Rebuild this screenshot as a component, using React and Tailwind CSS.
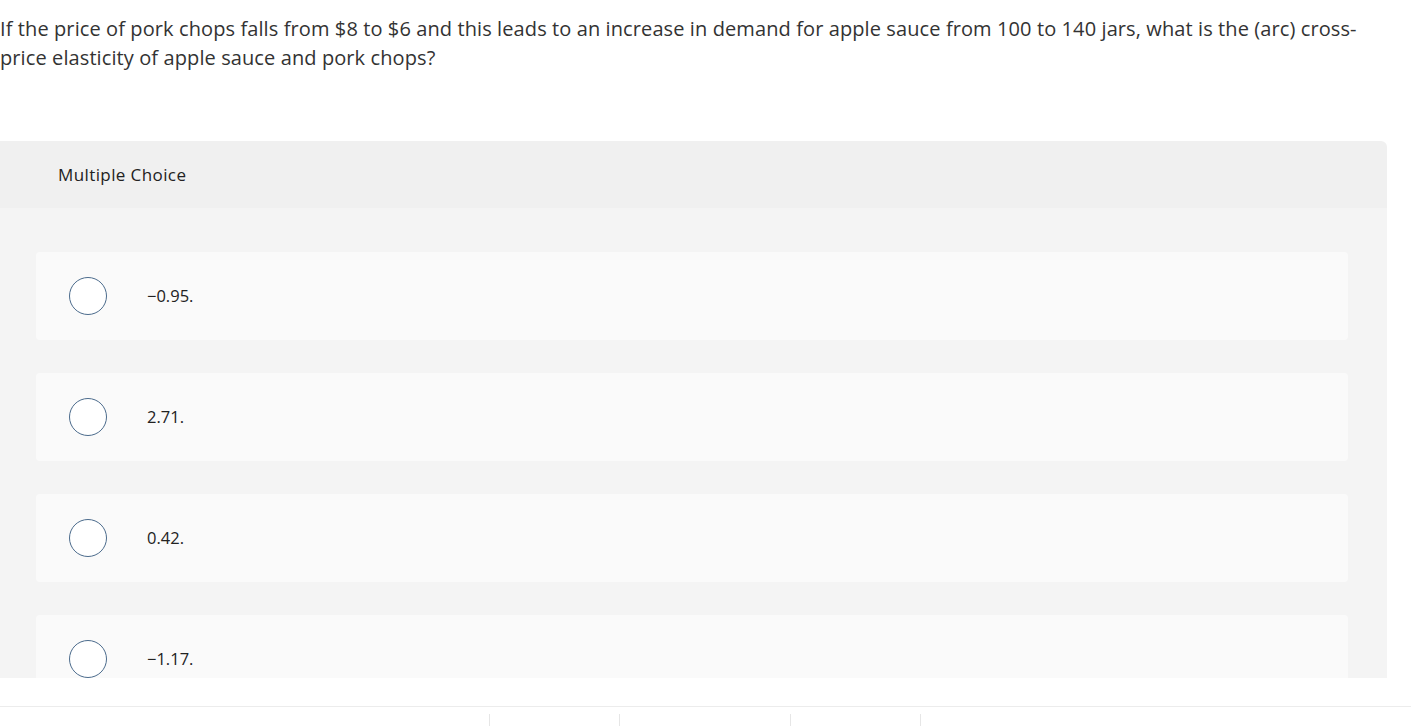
const options = ["\u22120.95.", "2.71.", "0.42.", "\u22121.17."];

const Option = ({ label }) => (
  <div className="flex items-center shrink-0 h-[88px] rounded-[4px] bg-[#fafafa]">
    <div className="ml-[33px] w-[38px] h-[38px] rounded-full border-[1.5px] border-[#4b6b8c] bg-white shrink-0" />
    <span className="ml-[40px] text-[16.5px] text-[#222]">{label}</span>
  </div>
);

export default function App() {
  return (
    <div
      className="w-[1411px] h-[726px] bg-white overflow-hidden text-[#333]"
      style={{ fontFamily: "'Open Sans', sans-serif" }}
    >
      <p className="w-[1372px] text-[20px] tracking-[0.1px] leading-[29px] pt-[14px]">
        If the price of pork chops falls from $8 to $6 and this leads to an increase in demand for apple sauce from 100 to 140 jars, what is the (arc) cross-price elasticity of apple sauce and pork chops?
      </p>
      <div className="mt-[69px] w-[1387px] rounded-tr-[6px] overflow-hidden">
        <div className="h-[67px] bg-[#f0f0f0] flex items-center pl-[58px] text-[17px] tracking-[0.4px] text-[#222]">
          Multiple Choice
        </div>
        <div className="h-[470px] bg-[#f4f4f4] overflow-hidden pt-[44px] pl-[36px] pr-[39px] flex flex-col gap-[33px]">
          {options.map((o) => (
            <Option key={o} label={o} />
          ))}
        </div>
      </div>
      <div className="mt-[28px] border-t border-[#ececec] flex h-[20px] pt-[7px]">
        <div className="ml-[489px] w-px h-[12px] bg-[#e6e6e6]" />
        <div className="ml-[129px] w-px h-[12px] bg-[#e6e6e6]" />
        <div className="ml-[170px] w-px h-[12px] bg-[#e6e6e6]" />
        <div className="ml-[129px] w-px h-[12px] bg-[#e6e6e6]" />
      </div>
    </div>
  );
}
